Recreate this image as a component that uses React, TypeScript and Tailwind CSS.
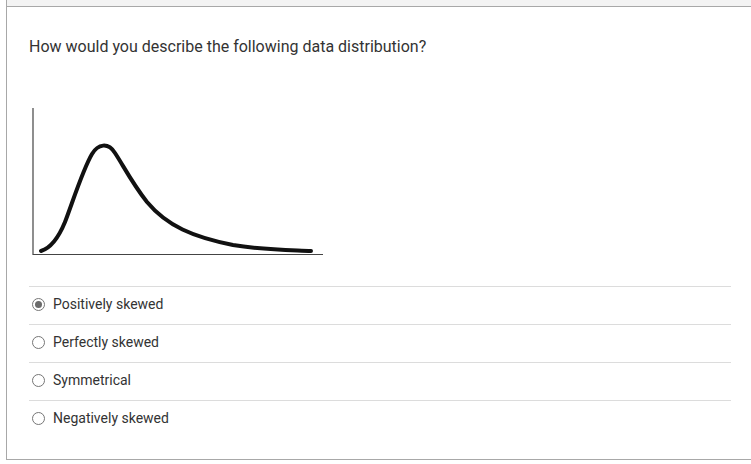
import React from 'react';

const options = ['Positively skewed', 'Perfectly skewed', 'Symmetrical', 'Negatively skewed'];

function Radio({ checked }: { checked: boolean }) {
  return (
    <span className="w-[13px] h-[13px] rounded-full border border-[#767676] bg-white flex items-center justify-center shrink-0">
      {checked && <span className="w-[7px] h-[7px] rounded-full bg-[#6b6b6b]" />}
    </span>
  );
}

function SkewChart() {
  return (
    <svg width="300" height="160" viewBox="26 105 300 160" className="block">
      <line x1="32" y1="111" x2="32" y2="258" stroke="#444" strokeWidth="1.2" />
      <line x1="32" y1="257.5" x2="322" y2="257.5" stroke="#444" strokeWidth="1.2" />
      <path
        d="M40 254 C50 251, 57 242, 64 225 C71 207, 82 172, 91 157 C97 147, 107 145, 114 156 C122 168, 131 186, 146 205 C166 229, 192 240, 232 248 C262 253, 290 253, 310 254"
        fill="none"
        stroke="#111"
        strokeWidth="4"
        strokeLinecap="round"
      />
    </svg>
  );
}

export default function App() {
  return (
    <div className="w-[751px] h-[464px] bg-white overflow-hidden" style={{ fontFamily: 'Roboto, "Noto Sans", sans-serif' }}>
      <div className="ml-[6px] h-[460px] border-l border-b border-[#a8a8a8]">
        <div className="h-[7px] bg-[#f3f3f3] border-b border-[#a8a8a8]" />
        <div className="pl-[22px] pr-[20px]">
          <p className="pt-[31px] text-[16px] leading-[18px] text-[#333]">
            How would you describe the following data distribution?
          </p>
          <div className="mt-[46px] -ml-[2px]">
            <SkewChart />
          </div>
          <div className="mt-[24px]">
            {options.map((o, i) => (
              <div key={o} className="h-[38px] border-t border-[#dcdcdc] flex items-center gap-[8px] pl-[3px] pb-[2px]">
                <Radio checked={i === 0} />
                <span className="text-[14px] text-[#333]">{o}</span>
              </div>
            ))}
          </div>
        </div>
      </div>
    </div>
  );
}
